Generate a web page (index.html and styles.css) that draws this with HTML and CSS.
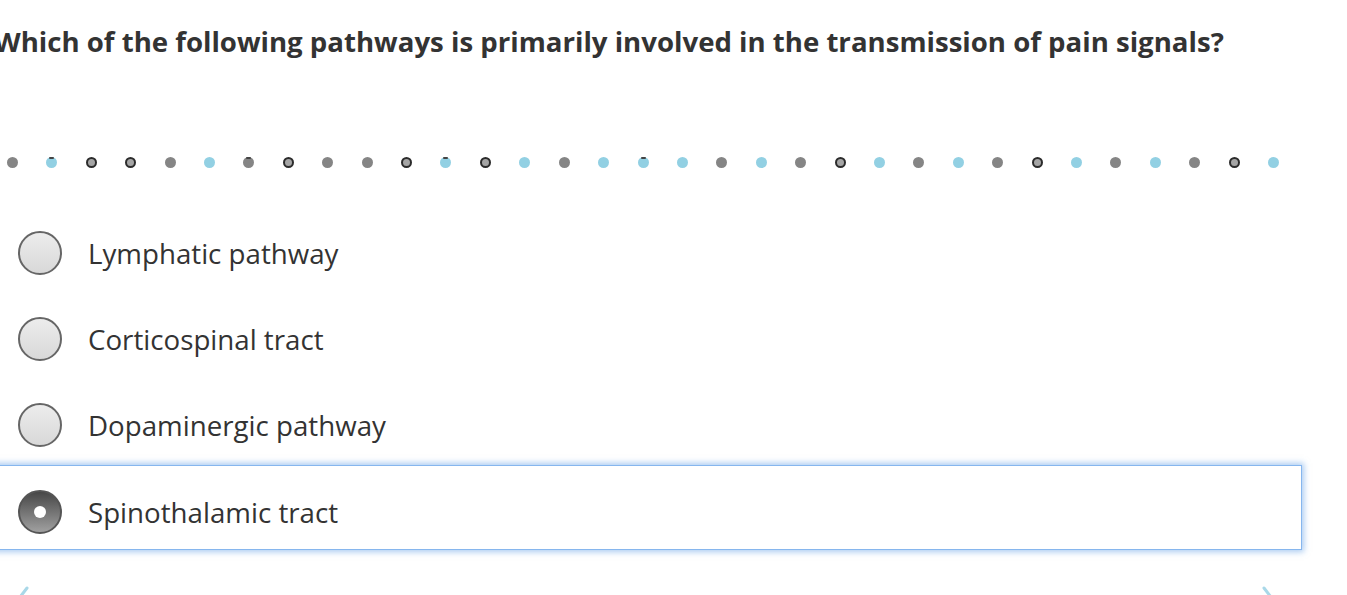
FILE: index.html
```html
<!DOCTYPE html>
<html lang="en">
<head>
  <meta charset="UTF-8">
  <title>Question</title>
  <link rel="stylesheet" href="styles.css">
</head>
<body>
  <div class="quiz">
    <h1 class="question">Which of the following pathways is primarily involved in the transmission of pain signals?</h1>

    <div class="progress">
      <span class="dot gray"></span>
      <span class="dot blue tick"></span>
      <span class="dot ring"></span>
      <span class="dot ring"></span>
      <span class="dot gray"></span>
      <span class="dot blue"></span>
      <span class="dot gray tick"></span>
      <span class="dot ring"></span>
      <span class="dot gray"></span>
      <span class="dot gray"></span>
      <span class="dot ring"></span>
      <span class="dot blue tick"></span>
      <span class="dot ring"></span>
      <span class="dot blue"></span>
      <span class="dot gray"></span>
      <span class="dot blue"></span>
      <span class="dot blue tick"></span>
      <span class="dot blue"></span>
      <span class="dot gray"></span>
      <span class="dot blue"></span>
      <span class="dot gray"></span>
      <span class="dot ring"></span>
      <span class="dot blue"></span>
      <span class="dot gray"></span>
      <span class="dot blue"></span>
      <span class="dot gray"></span>
      <span class="dot ring"></span>
      <span class="dot blue"></span>
      <span class="dot gray"></span>
      <span class="dot blue"></span>
      <span class="dot gray"></span>
      <span class="dot ring"></span>
      <span class="dot blue"></span>
    </div>

    <ul class="options">
      <li class="option"><span class="radio"></span><span class="label">Lymphatic pathway</span></li>
      <li class="option"><span class="radio"></span><span class="label">Corticospinal tract</span></li>
      <li class="option"><span class="radio"></span><span class="label">Dopaminergic pathway</span></li>
      <li class="option selected"><span class="radio"></span><span class="label">Spinothalamic tract</span></li>
    </ul>

    <div class="nav">
      <svg class="arrow" width="16" height="30" viewBox="0 0 16 30"><path d="M13 2 L3 15 L13 28" fill="none" stroke="#a9d8e8" stroke-width="3" stroke-linecap="round"/></svg>
      <svg class="arrow" width="16" height="30" viewBox="0 0 16 30"><path d="M3 2 L13 15 L3 28" fill="none" stroke="#a9d8e8" stroke-width="3" stroke-linecap="round"/></svg>
    </div>
  </div>
</body>
</html>
```

FILE: styles.css
```css
body {
  margin: 0;
  background: #fff;
  font-family: "Open Sans", "Liberation Sans", sans-serif;
  color: #333;
  overflow: hidden;
}
.quiz {
  width: 1322px;
  margin-left: -20px;
}
.question {
  margin: 0;
  padding: 22px 0 0 14px;
  font-size: 27.6px;
  font-weight: 700;
  line-height: 38px;
  color: #333;
  white-space: nowrap;
}
.progress {
  display: flex;
  justify-content: space-between;
  align-items: center;
  width: 1272px;
  margin: 97px 0 0 27px;
  height: 11px;
}
.dot {
  position: relative;
  width: 11px;
  height: 11px;
  border-radius: 50%;
  box-sizing: border-box;
}
.dot.gray {
  background: #858585;
}
.dot.blue {
  background: #92d0e3;
}
.dot.ring {
  background: #a5a5a5;
  border: 2.5px solid #2b2b2b;
}
.dot.tick::before {
  content: "";
  position: absolute;
  top: 0;
  left: 3px;
  width: 5px;
  height: 1.5px;
  background: #444;
  border-radius: 1px;
}
.options {
  list-style: none;
  margin: 38px 0 0;
  padding: 0;
}
.option {
  display: flex;
  align-items: center;
  height: 86px;
  padding: 8px 0 0 38px;
  box-sizing: border-box;
}
.option.selected {
  background: #fff;
  border: 1px solid #86b6ee;
  box-shadow: 0 0 6px 2px rgba(100, 160, 230, 0.55);
  padding-left: 37px;
  margin-top: 1px;
  height: 85px;
}
.radio {
  display: flex;
  align-items: center;
  justify-content: center;
  width: 44px;
  height: 44px;
  border-radius: 50%;
  border: 2px solid #666;
  box-sizing: border-box;
  background: linear-gradient(#ececec, #d8d8d8);
  flex-shrink: 0;
}
.selected .radio {
  border-color: #555;
  background: linear-gradient(#474747, #a0a0a0);
}
.selected .radio::after {
  content: "";
  width: 12px;
  height: 12px;
  border-radius: 50%;
  background: #fff;
}
.label {
  margin-left: 26px;
  font-size: 27.7px;
  line-height: 36px;
  color: #333;
}
.nav {
  display: flex;
  justify-content: space-between;
  padding: 36px 25px 0 34px;
  width: 1263px;
}
```
